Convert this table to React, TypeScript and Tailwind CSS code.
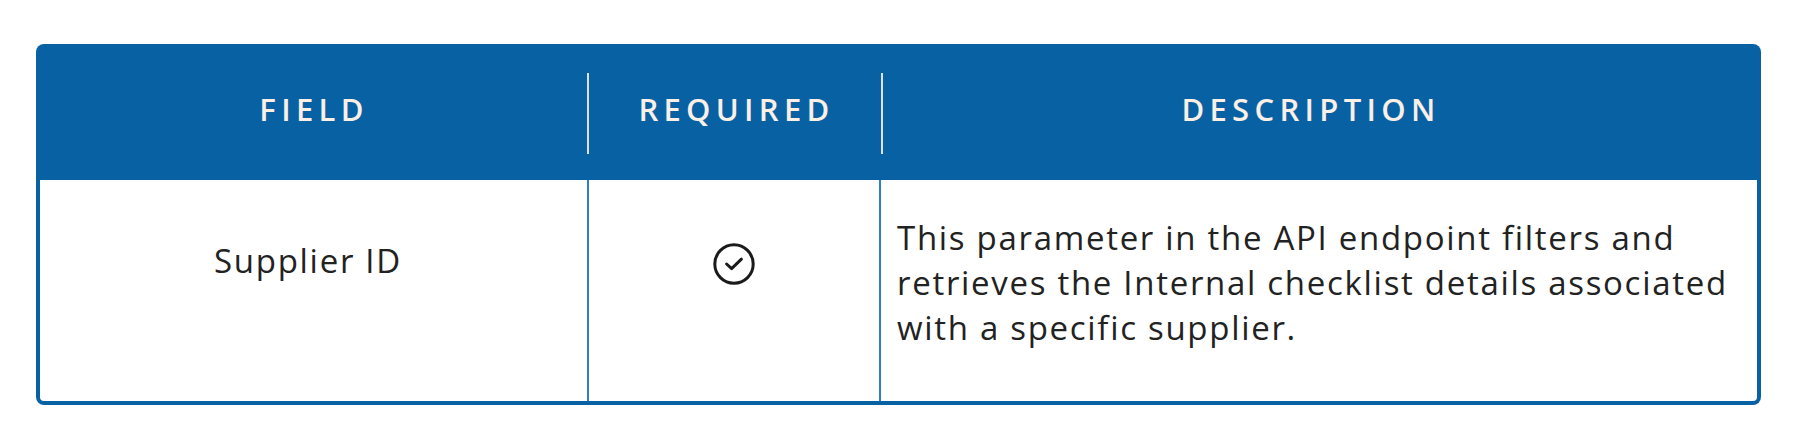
import React from "react";

export default function App() {
  return (
    <div className="w-[1799px] h-[441px] bg-white pl-[36px] pt-[44px]" style={{ fontFamily: '"Open Sans", sans-serif' }}>
      <div className="w-[1725px]">
        {/* Header */}
        <div className="grid grid-cols-[551px_294px_1fr] h-[136px] bg-[#0761a3] rounded-t-[8px] items-center">
          <div className="flex justify-center pb-[6px]">
            <span className="text-[#fbefe6] text-[31px] font-semibold tracking-[5.3px] mr-[-5px]">FIELD</span>
          </div>
          <div className="relative flex justify-center h-full items-center pb-[6px]">
            <div className="absolute left-[0px] top-[29px] h-[81px] w-[2px] bg-[#dfe3e8]" />
            <span className="text-[#fbefe6] text-[31px] font-semibold tracking-[5.3px] mr-[-5px]">REQUIRED</span>
            <div className="absolute right-[-2px] top-[29px] h-[81px] w-[2px] bg-[#dfe3e8]" />
          </div>
          <div className="flex justify-center pb-[6px] pr-[25px]">
            <span className="text-[#fbefe6] text-[31px] font-semibold tracking-[5.3px] mr-[-5px]">DESCRIPTION</span>
          </div>
        </div>
        {/* Body */}
        <div className="grid grid-cols-[547px_294px_1fr] border-[4px] border-t-0 border-[#0761a3] rounded-b-[8px] h-[225px] text-[#222222] text-[33px] leading-[45px] tracking-[1.7px]">
          <div className="flex justify-center pt-[58px] pr-[11px]">
            <span>Supplier ID</span>
          </div>
          <div className="flex justify-center pt-[60px] border-l-2 border-r-2 border-[#2f7fc1]">
            <svg width="48" height="48" viewBox="0 0 24 24" fill="none" stroke="#1a1a1a" strokeWidth="1.5" strokeLinecap="round" strokeLinejoin="round">
              <circle cx="12" cy="12" r="9.6" />
              <path d="M8.3 12 L10.8 14.3 L15.7 9.6" />
            </svg>
          </div>
          <div className="pl-[16px] pt-[35px]">
            <p>
              This parameter in the API endpoint filters and
              <br />
              retrieves the Internal checklist details associated
              <br />
              with a specific supplier.
            </p>
          </div>
        </div>
      </div>
    </div>
  );
}
